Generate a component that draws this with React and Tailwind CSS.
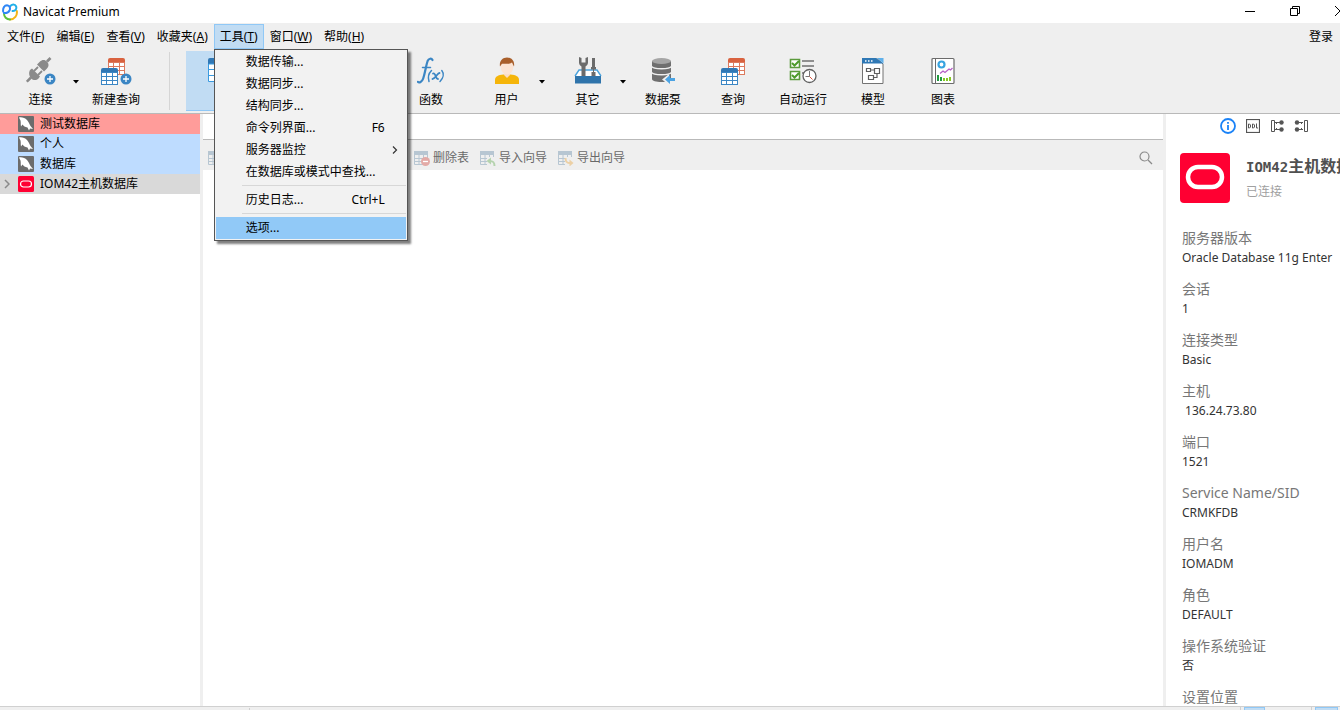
import React, { useState } from 'react';

const menus = [
  { label: '文件', accel: 'F' },
  { label: '编辑', accel: 'E' },
  { label: '查看', accel: 'V' },
  { label: '收藏夹', accel: 'A' },
  { label: '工具', accel: 'T' },
  { label: '窗口', accel: 'W' },
  { label: '帮助', accel: 'H' },
];

const toolItems = [
  { label: '数据传输...' },
  { label: '数据同步...' },
  { label: '结构同步...' },
  { label: '命令列界面...', shortcut: 'F6' },
  { label: '服务器监控', submenu: true },
  { label: '在数据库或模式中查找...' },
  { separator: true },
  { label: '历史日志...', shortcut: 'Ctrl+L' },
  { separator: true },
  { label: '选项...' },
];

const connections = [
  { name: '测试数据库', type: 'mysql', row: 'bg-[#ff9c9a]' },
  { name: '个人', type: 'mysql', row: 'bg-[#bedcff]' },
  { name: '数据库', type: 'mysql', row: 'bg-[#bedcff]' },
  { name: 'IOM42主机数据库', type: 'oracle', row: 'bg-[#d9d9d9]', expandable: true },
];

const details = [
  { label: '服务器版本', value: 'Oracle Database 11g Enter' },
  { label: '会话', value: '1' },
  { label: '连接类型', value: 'Basic' },
  { label: '主机', value: ' 136.24.73.80' },
  { label: '端口', value: '1521' },
  { label: 'Service Name/SID', value: 'CRMKFDB' },
  { label: '用户名', value: 'IOMADM' },
  { label: '角色', value: 'DEFAULT' },
  { label: '操作系统验证', value: '否' },
  { label: '设置位置', value: '' },
];

function NavicatLogo() {
  return (
    <svg width="16" height="18" viewBox="0 0 16 18" fill="none" strokeWidth="2" strokeLinecap="round">
      <path d="M14.800 8c.8 4.500-2.300 8.500-6.800 8.500" stroke="#f5b417" />
      <path d="M8 16.500c-3.500 0-6-2.800-6-6" stroke="#5cc13c" />
      <path d="M8 3.500C9.500 1 13 .8 14.200 3.500c.8 2.200-.7 4.800-3.700 4.500" stroke="#22b0e8" />
      <path d="M1.200 8.500C.6 5 2.500 2.300 5 2.300c2.800.2 3.600 3.200 2.500 5.200C6.500 9.500 4 10.300 2 10" stroke="#2f86f6" />
    </svg>
  );
}

function TableGlyph({ x, y, color, line }) {
  return (
    <g>
      <path d={`M${x} ${y + 5}v-3a2 2 0 0 1 2-2h13a2 2 0 0 1 2 2v3z`} fill={color} />
      <rect x={x + 0.5} y={y + 4.5} width="16" height="12" fill="#fff" stroke={line} />
      <path
        d={`M${x + 5.5} ${y + 5}v11M${x + 11.500} ${y + 5}v11M${x} ${y + 8.500}h17M${x} ${y + 12.500}h17`}
        stroke={line}
      />
    </g>
  );
}

function PlusBadge({ x, y }) {
  return (
    <g>
      <circle cx={x} cy={y} r="5.500" fill="#3b86c4" />
      <path d={`M${x - 3} ${y}h6M${x} ${y - 3}v6`} stroke="#fff" strokeWidth="1.300" />
    </g>
  );
}

function ConnectIcon() {
  return (
    <svg width="30" height="28" viewBox="0 0 30 28">
      <g fill="#8a8a8a" stroke="#8a8a8a">
        <path d="M11 7.500l3-3c2.200-2.200 5-2 7 0s2.200 4.800 0 7l-3 3z" stroke="none" />
        <path d="M21 4.500l3.500-3.500" strokeWidth="2.600" />
        <path d="M4 13l2-1.500 8 8L12.500 21.500c-2.200 2-5.200 2-7.200 0s-3-5.500-1.300-8.500z" stroke="none" />
        <path d="M5 20.500L.8 24.700" strokeWidth="2.600" />
        <path d="M8 14l4-4M12 18l4-4" strokeWidth="1.800" />
      </g>
      <PlusBadge x={24} y={22} />
    </svg>
  );
}

function NewQueryIcon() {
  return (
    <svg width="32" height="28" viewBox="0 0 32 28">
      <TableGlyph x={8} y={1} color="#d9623f" line="#dc7a5e" />
      <TableGlyph x={1} y={11} color="#3178b5" line="#3b86c4" />
      <PlusBadge x={26} y={22} />
    </svg>
  );
}

function QueryIcon() {
  return (
    <svg width="26" height="28" viewBox="0 0 26 28">
      <TableGlyph x={8} y={1} color="#d9623f" line="#dc7a5e" />
      <TableGlyph x={1} y={11} color="#3178b5" line="#3b86c4" />
    </svg>
  );
}

function TableIcon() {
  return (
    <svg width="26" height="28" viewBox="0 0 26 28">
      <path d="M0 7V3a2 2 0 0 1 2-2h22a2 2 0 0 1 2 2v4z" fill="#3178b5" />
      <path d="M.5 7v17.500h25V7z" fill="#fff" stroke="#3b9be0" />
      <path d="M9 7v17M17 7v17M0 12.500h26M0 18.500h26" stroke="#3b9be0" />
    </svg>
  );
}

function FunctionIcon() {
  return (
    <svg width="28" height="28" viewBox="0 0 28 28" fill="none" stroke="#3b86c4" strokeLinecap="round">
      <path d="M15.500 3c-1-2-3.800-1.700-4.900 1C9 8.500 8.300 15 6.200 21.500 5 25 2.200 26.300.8 24.800" strokeWidth="2.200" />
      <path d="M5.500 10.500h8" strokeWidth="1.500" />
      <path d="M14.500 13.500c-3 3-3.800 7-2.500 11M24.800 13.500c2.500 3 1.500 7.500-1.800 11" strokeWidth="1.500" />
      <path d="M16 16.500c3-1 2.500 6 5 5.500M22.500 16c-2 0-4.500 6-7 6" strokeWidth="1.800" />
    </svg>
  );
}

function UserIcon() {
  return (
    <svg width="24" height="28" viewBox="0 0 24 28">
      <path d="M0 27v-4c0-3.500 3-5 8.500-5.500h7c5.500.5 8.500 2 8.500 5.500v4z" fill="#f5b50a" />
      <path d="M9 14h6v4l-3 3-3-3z" fill="#f9dcc6" />
      <ellipse cx="12" cy="10" rx="6.300" ry="7.500" fill="#fce4d4" />
      <path d="M5 9.500C4 4 7.500.5 12 .5s8 3.500 7 9c-1-2-1.500-3-2-4-3 2-7 1-10 1.200C6 7.500 6 8.500 5 9.500z" fill="#a95f2b" />
    </svg>
  );
}

function OtherIcon() {
  return (
    <svg width="28" height="28" viewBox="0 0 28 28">
      <path d="M1 19l4-6h18l4 6" fill="#fff" stroke="#4ba3dd" strokeWidth="1.400" />
      <path d="M5 0v5.500c0 2 1.200 3.200 2.500 4V19h4V9.500c1.300-.8 2.500-2 2.500-4V0l-2.500 1v4.500h-4V1z" fill="#6b6b6b" />
      <path d="M18 1h3v9h-3zM17 10h5v2.500h-5zM17.500 15h4v4h-4zM19 11h1v5h-1z" fill="#6b6b6b" />
      <path d="M1 19h26v7.500H1z" fill="#2f74ab" />
    </svg>
  );
}

function PumpIcon() {
  return (
    <svg width="26" height="28" viewBox="0 0 26 28">
      <path d="M2 4v18c0 1.800 4 3 9.500 3S21 23.800 21 22V4z" fill="#6f6f6f" />
      <ellipse cx="11.500" cy="4" rx="9.500" ry="3" fill="#a5a5a5" />
      <path d="M2 9.500c1 3 18 3 19 0M2 15.500c1 3 18 3 19 0" stroke="#efefef" strokeWidth="1.300" fill="none" />
      <path d="M12 22.500l7-5.500v4h7v4h-7v3z" fill="#efefef" />
      <path d="M15 22.500l5-4.500v3h5v3h-5v3z" fill="#4ba3e3" />
    </svg>
  );
}

function AutoRunIcon() {
  return (
    <svg width="28" height="28" viewBox="0 0 28 28" fill="none">
      <path d="M1.500 2.500h9v8h-9zM1.500 14.500h9v8h-9z" fill="#fff" stroke="#5b9a3c" strokeWidth="1.600" />
      <path d="M3 6l2.500 2.500L10 4M3 18l2.500 2.500L10 16" stroke="#4c9a2a" strokeWidth="2" />
      <path d="M13 4h12M13 9h12M13 16h3" stroke="#8f8f8f" strokeWidth="1.800" />
      <circle cx="20.500" cy="19" r="6.500" fill="#fff" stroke="#606060" strokeWidth="1.300" />
      <path d="M20.500 14v5.500h-4" stroke="#777" />
      <path d="M20.500 19.500l3 3" stroke="#d9523a" />
    </svg>
  );
}

function ModelIcon() {
  return (
    <svg width="22" height="28" viewBox="0 0 22 28">
      <path d="M.5 2h15L21 7v19.500H.5z" fill="#fff" stroke="#737373" />
      <path d="M0 1h14l7.500 5.500H0z" fill="#2f78b5" />
      <path d="M15 1h6.500v5.500z" fill="#5fb0ea" />
      <path d="M3 4h1.500M6 4h1.500M9 4h1.500" stroke="#fff" strokeWidth="1.500" />
      <path d="M4.500 11.500h4v3h-4zM12.500 11.500h5v5h-5zM6.500 18.500h5v4h-5zM8.500 13h4M15 16.500v4h-3.500" fill="none" stroke="#5f5f5f" strokeWidth="1.200" />
    </svg>
  );
}

function ChartIcon() {
  return (
    <svg width="24" height="28" viewBox="0 0 24 28" fill="none">
      <rect x="1" y="1.500" width="22" height="25" rx="1" fill="#fff" stroke="#6b6b6b" strokeWidth="1.200" />
      <path d="M4.500 1.500v25" stroke="#6b6b6b" />
      <circle cx="10.500" cy="7.500" r="3" stroke="#38a4e0" strokeWidth="2.200" />
      <path d="M9 16.500l3-2.500 2 1.500 4-3.500 1.500 1 2-2" stroke="#b65fc8" strokeWidth="1.300" />
      <path d="M7 24v-6M10 24v-4" stroke="#239b40" strokeWidth="2" />
      <path d="M13 24v-3M16 24v-3M19 24v-4" stroke="#86c926" strokeWidth="2" />
    </svg>
  );
}

const objectButtons = [
  { label: '函数', icon: FunctionIcon },
  { label: '用户', icon: UserIcon, dropdown: true },
  { label: '其它', icon: OtherIcon, dropdown: true },
  { label: '数据泵', icon: PumpIcon },
  { label: '查询', icon: QueryIcon },
  { label: '自动运行', icon: AutoRunIcon },
  { label: '模型', icon: ModelIcon },
  { label: '图表', icon: ChartIcon },
];

function ToolButton({ label, icon: Icon, dropdown }) {
  const face = (
    <span className="flex flex-col items-center gap-[5px]">
      <Icon />
      <span className="whitespace-nowrap leading-5">{label}</span>
    </span>
  );
  if (!dropdown) {
    return <button type="button" className="flex w-[70px] justify-center pt-2">{face}</button>;
  }
  return (
    <button type="button" className="grid w-[81px] grid-cols-[10px_1fr_10px] content-start items-center pt-2">
      <span />
      {face}
      <svg width="6" height="4" viewBox="0 0 6 4" className="mx-auto mb-1">
        <path d="M0 0h6L3 3.500z" fill="#000" />
      </svg>
    </button>
  );
}

function GridIcon({ kind }) {
  return (
    <svg width="17" height="16" viewBox="0 0 17 16" fill="none">
      <path d="M1 1h14v4H1z" fill="#b7c6d2" />
      <path d="M1.500 5v9.500h13V5M6 5v9M10.500 5v9M1 8.500h14M1 11.500h14" stroke="#b7c6d2" />
      {kind === 'delete' && (
        <g>
          <circle cx="12.500" cy="11.500" r="4.500" fill="#e3aaa6" />
          <path d="M10 11.500h5" stroke="#fff" strokeWidth="1.300" />
        </g>
      )}
      {kind === 'import' && (
        <g>
          <path d="M8 7h9v9H8z" fill="#efefef" />
          <path d="M15.500 16c0-3.500-1-5-5-5" stroke="#b5d3ae" strokeWidth="2" />
          <path d="M7.500 11L12 7.500v7z" fill="#b5d3ae" />
        </g>
      )}
      {kind === 'export' && (
        <g>
          <path d="M8 7h9v9H8z" fill="#efefef" />
          <path d="M8.500 8c0 3.500 1 5 5 5" stroke="#ecd0a5" strokeWidth="2" />
          <path d="M16.500 13L12.500 9.500v7z" fill="#ecd0a5" />
        </g>
      )}
    </svg>
  );
}

function ConnectionIcon({ type }) {
  if (type === 'oracle') {
    return (
      <svg width="16" height="16" viewBox="0 0 16 16">
        <rect width="16" height="16" rx="1.500" fill="#ff0032" />
        <rect x="2.500" y="5" width="11" height="6" rx="3" fill="none" stroke="#fff" strokeWidth="1.200" />
      </svg>
    );
  }
  return (
    <svg width="16" height="16" viewBox="0 0 16 16">
      <rect width="16" height="16" rx="1" fill="#6c6c6c" />
      <path d="M1 1.500c3-.5 6 .5 8 2.500 2 2.200 2.500 4.500 3.500 6l2.500 3-3-.5-1 2-1.500-3C7 11 5.500 10 4.500 8.500L3 10.500C2.500 8 3 6.500 2.500 4.500z" fill="#fff" />
    </svg>
  );
}

function ToolsMenu() {
  return (
    <div
      role="menu"
      className="absolute top-full left-0 z-10 w-[194px] border border-[#555] bg-[#f2f2f2] p-px shadow-[3px_3px_2px_rgba(0,0,0,0.5)]"
    >
      {toolItems.map((item, i) =>
        item.separator ? (
          <div key={i} className="h-1.5 pt-0.5 pl-[26px]">
            <div className="h-px bg-[#d7d7d7]" />
          </div>
        ) : (
          <button
            key={i}
            type="button"
            role="menuitem"
            className={`flex h-[22px] w-full items-center justify-between pl-[30px] ${
              item.submenu ? 'pr-2' : 'pr-[21px]'
            } ${item.label === '选项...' ? 'bg-[#91c9f7]' : ''}`}
          >
            <span className="whitespace-nowrap">{item.label}</span>
            {item.shortcut && <span>{item.shortcut}</span>}
            {item.submenu && (
              <svg width="6" height="8" viewBox="0 0 6 8" fill="none">
                <path d="M1 .5L4.500 4 1 7.500" stroke="#333" strokeWidth="1.200" />
              </svg>
            )}
          </button>
        )
      )}
    </div>
  );
}

function TitleBar() {
  return (
    <header className="flex h-[23px] shrink-0 items-center overflow-hidden bg-white pl-0.5">
      <NavicatLogo />
      <h1 className="ml-[5px] flex-1">Navicat Premium</h1>
      <div className="-mr-[22px] flex h-full pb-0.5">
        <button type="button" aria-label="最小化" className="flex w-[45px] items-center justify-center">
          <svg width="10" height="10" viewBox="0 0 10 10"><path d="M0 5.500h10" stroke="#000" /></svg>
        </button>
        <button type="button" aria-label="还原" className="flex w-[45px] items-center justify-center">
          <svg width="10" height="10" viewBox="0 0 10 10" fill="none" stroke="#000">
            <path d="M.5 2.500h7v7h-7zM2.500 2.500v-2h7v7h-2" />
          </svg>
        </button>
        <button type="button" aria-label="关闭" className="flex w-[45px] items-center justify-center">
          <svg width="10" height="10" viewBox="0 0 10 10"><path d="M0 0l10 10M10 0L0 10" stroke="#000" /></svg>
        </button>
      </div>
    </header>
  );
}

function MenuBar({ open, onToggle }) {
  return (
    <nav className="flex h-[26px] shrink-0 bg-[#efefef] pt-px pl-px">
      {menus.map((menu) => (
        <div key={menu.label} className="relative">
          <button
            type="button"
            onClick={() => onToggle(menu.label)}
            className={`h-full border px-[5px] whitespace-nowrap ${
              open === menu.label ? 'border-[#90c8f6] bg-[#c1dcf3]' : 'border-transparent'
            }`}
          >
            {menu.label}(<span className="underline">{menu.accel}</span>)
          </button>
          {open === menu.label && menu.label === '工具' && <ToolsMenu />}
        </div>
      ))}
      <button type="button" className="ml-auto pr-[7px]">登录</button>
    </nav>
  );
}

function ObjectPane() {
  return (
    <main className="flex min-w-0 flex-1 flex-col">
      <div className="h-[26px] border-b border-[#b9b9b9]" />
      <div className="flex h-[30px] items-center bg-[#efefef] pt-1.5 pr-2.5 pl-1 text-[#6a6a6a]">
        <button type="button" aria-label="打开表" className="w-[206px]"><GridIcon /></button>
        <div className="flex gap-2.5">
          <button type="button" className="flex items-center gap-[3px]"><GridIcon kind="delete" />删除表</button>
          <button type="button" className="flex items-center gap-[3px]"><GridIcon kind="import" />导入向导</button>
          <button type="button" className="flex items-center gap-[3px]"><GridIcon kind="export" />导出向导</button>
        </div>
        <button type="button" aria-label="搜索" className="ml-auto">
          <svg width="14" height="14" viewBox="0 0 14 14" fill="none" stroke="#8a8a8a" strokeWidth="1.200">
            <circle cx="5.500" cy="5.500" r="4.500" />
            <path d="M9 9l4 4" />
          </svg>
        </button>
      </div>
    </main>
  );
}

function InfoPane() {
  return (
    <aside className="w-[177px] shrink-0 overflow-hidden border-l-[3px] border-[#efefef]">
      <div className="flex items-center gap-2.5 pt-1 pl-[54px]">
        <button type="button" aria-label="常规">
          <svg width="16" height="16" viewBox="0 0 16 16" fill="none" stroke="#1a82f7">
            <circle cx="8" cy="8" r="7" strokeWidth="1.800" />
            <path d="M8 7v5M8 4v1.800" strokeWidth="1.800" />
          </svg>
        </button>
        <button type="button" aria-label="DDL">
          <svg width="14" height="14" viewBox="0 0 14 14" fill="none" stroke="#555">
            <rect x=".5" y=".5" width="13" height="13" strokeWidth="1.200" />
            <path d="M2.500 5v4h1l1-1V6l-1-1zM6.500 5v4h1l1-1V6l-1-1zM10.500 4.500V9h1.500" />
          </svg>
        </button>
        <button type="button" aria-label="使用">
          <svg width="14" height="14" viewBox="0 0 14 14" fill="none" stroke="#555">
            <path d="M1.500 1.500h3v11h-3zM5 3.500h5M5 10.500h5M6.500 3.500v1.500M6.500 9v1.500" />
            <circle cx="11.500" cy="3.500" r="2.200" fill="#555" stroke="none" />
            <circle cx="11.500" cy="10.500" r="2.200" fill="#555" stroke="none" />
          </svg>
        </button>
        <button type="button" aria-label="被使用">
          <svg width="14" height="14" viewBox="0 0 14 14" fill="none" stroke="#555">
            <path d="M10.500 1.500h3v11h-3zM4 3.500h5M4 10.500h5M7.500 3.500v1.500M7.500 9v1.500" />
            <circle cx="3" cy="3.500" r="2.200" fill="#555" stroke="none" />
            <circle cx="3" cy="10.500" r="2.200" fill="#555" stroke="none" />
          </svg>
        </button>
      </div>
      <div className="mt-[19px] flex gap-4 pl-3.5">
        <svg width="50" height="50" viewBox="0 0 50 50" className="shrink-0">
          <rect width="50" height="50" rx="4" fill="#ff0032" />
          <rect x="8" y="14" width="34" height="20" rx="10" fill="none" stroke="#fff" strokeWidth="4.500" />
        </svg>
        <div className="pt-1 whitespace-nowrap">
          <h2 className="font-['DejaVu_Sans_Mono','Noto_Sans_CJK_SC',monospace] text-base leading-5 font-bold text-[#505050]">
            <span className="text-sm">IOM42</span>主机数据库
          </h2>
          <p className="mt-[5px] leading-5 text-[#a0a0a0]">已连接</p>
        </div>
      </div>
      <dl className="mt-[25px] flex flex-col gap-[11px] pl-4">
        {details.map((row) => (
          <div key={row.label} className="leading-5 whitespace-pre">
            <dt className="text-sm leading-5 text-[#777]">{row.label}</dt>
            <dd className="text-[#333]">{row.value}</dd>
          </div>
        ))}
      </dl>
    </aside>
  );
}

export default function App() {
  const [openMenu, setOpenMenu] = useState('工具');
  const toggleMenu = (label) => setOpenMenu(openMenu === label ? null : label);

  return (
    <div className="flex h-screen flex-col overflow-hidden bg-white font-['Noto_Sans','Noto_Sans_CJK_SC',sans-serif] text-xs text-black">
      <TitleBar />
      <MenuBar open={openMenu} onToggle={toggleMenu} />

      <div className="flex h-[65px] shrink-0 border-b border-[#b9b9b9] bg-[#efefef]">
        <ToolButton label="连接" icon={ConnectIcon} dropdown />
        <ToolButton label="新建查询" icon={NewQueryIcon} />
        <div className="mt-[3px] mr-4 mb-[3px] ml-[18px] w-px bg-[#d5d5d5]" />
        <button
          type="button"
          aria-label="表"
          className="mt-0.5 mr-[140px] mb-0.5 flex w-[70px] justify-center border-b border-[#90c8f6] bg-[#c1dcf3] pt-1.5"
        >
          <TableIcon />
        </button>
        {objectButtons.map((btn) => (
          <ToolButton key={btn.label} {...btn} />
        ))}
      </div>

      <div className="flex min-h-0 flex-1">
        <aside className="w-[203px] shrink-0 border-r-[3px] border-[#efefef]">
          <ul>
            {connections.map((conn) => (
              <li key={conn.name} className={`flex h-5 items-center ${conn.row}`}>
                <span className="w-[18px] pl-1">
                  {conn.expandable && (
                    <svg width="6" height="10" viewBox="0 0 6 10" fill="none">
                      <path d="M1 1l4 4-4 4" stroke="#8a8a8a" strokeWidth="1.500" />
                    </svg>
                  )}
                </span>
                <ConnectionIcon type={conn.type} />
                <span className="ml-1.5">{conn.name}</span>
              </li>
            ))}
          </ul>
        </aside>
        <ObjectPane />
        <InfoPane />
      </div>

      <footer className="flex h-1 shrink-0 border-t border-[#d0d0d0] bg-[#efefef]">
        <div className="ml-[249px] mt-px w-px bg-[#d0d0d0]" />
        <div className="ml-auto w-px bg-[#d0d0d0]" />
        <div className="ml-[3px] w-[21px] border-x border-t border-[#90c8f6] bg-[#c1dcf3]" />
        <div className="ml-[46px] w-px bg-[#d0d0d0]" />
        <div className="mr-0.5 ml-[3px] w-[23px] border-x border-t border-[#90c8f6] bg-[#c1dcf3]" />
      </footer>
    </div>
  );
}
